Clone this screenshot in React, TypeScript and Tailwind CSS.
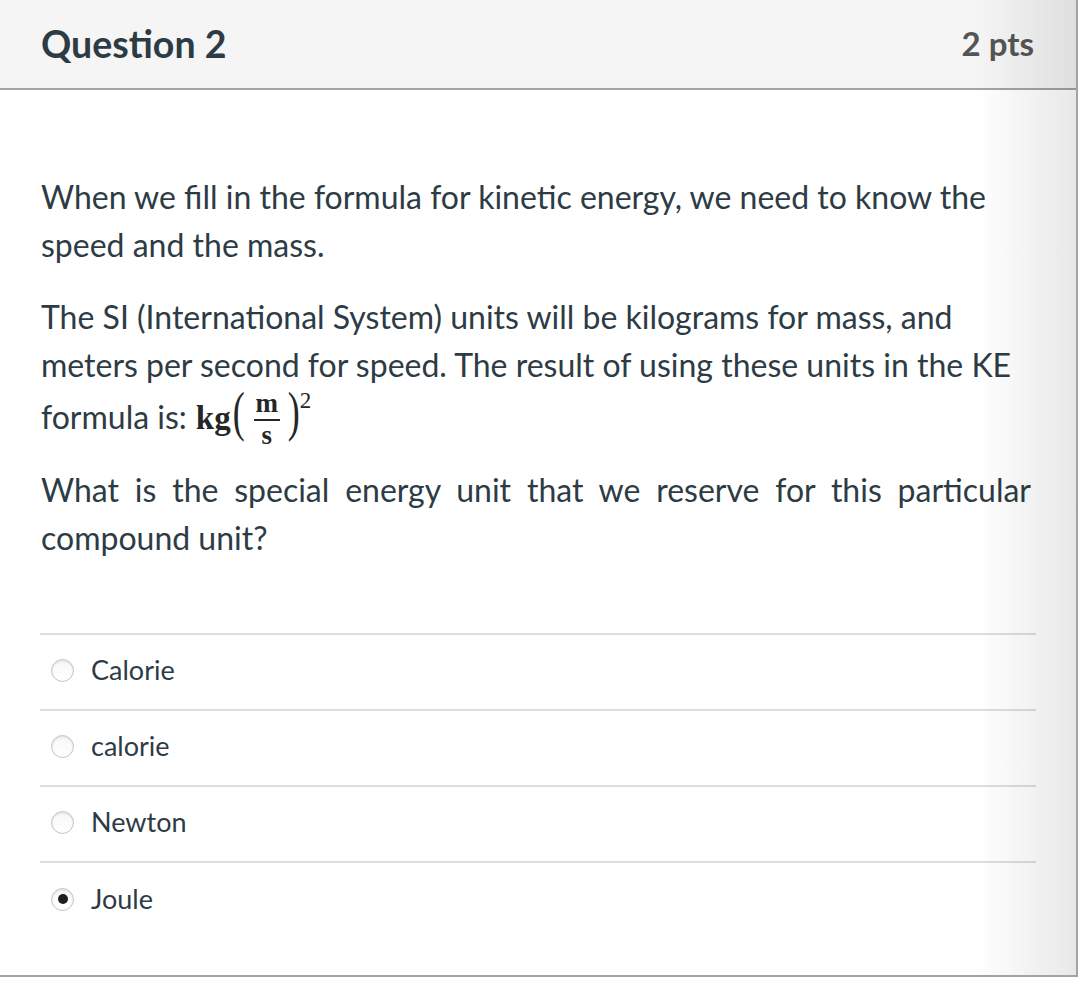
import React from 'react';

const answers = [
  { label: 'Calorie', checked: false },
  { label: 'calorie', checked: false },
  { label: 'Newton', checked: false },
  { label: 'Joule', checked: true },
];

function Radio({ checked }: { checked: boolean }) {
  return (
    <span className="w-[23px] h-[23px] rounded-full border border-[#c4c4c4] bg-gradient-to-b from-[#f7f7f7] to-[#ffffff] shadow-[inset_0_1px_2px_rgba(0,0,0,0.12)] flex items-center justify-center shrink-0">
      {checked && <span className="w-[10px] h-[10px] rounded-full bg-[#1e1e1e]" />}
    </span>
  );
}

// kg(m/s)^2 set like a MathJax formula
function MathUnit() {
  return (
    <span className="font-['Liberation_Serif',serif] text-[#262626] ml-[9px]">
      <span className="text-[33px] font-bold">kg</span>
      <span className="inline-block w-[12px] ml-[2px] text-[36px] leading-none align-[6px] scale-y-[1.55]">(</span>
      <span className="inline-flex flex-col items-center w-[26px] ml-[9px] align-[17px] font-bold text-[27px] leading-[14px]">
        <span>m</span>
        <span className="w-[26px] h-[1.5px] bg-[#262626] mt-[9px]" />
        <span className="mt-[7px]">s</span>
      </span>
      <span className="inline-block w-[11px] ml-[8px] text-[36px] leading-none align-[6px] scale-y-[1.55]">)</span>
      <span className="inline-block ml-[1px] text-[23px] leading-none align-[21px]">2</span>
    </span>
  );
}

export default function App() {
  return (
    <div className="w-[1082px] h-[990px] bg-white font-['Lato',sans-serif] text-[#2d3b45] overflow-hidden">
      <div className="relative w-[1078px] h-[977px] border-r-[2px] border-b-[2px] border-[#a3a3a3] bg-white">
        <div className="flex items-center justify-between h-[90px] bg-[#f5f5f5] border-b-[2px] border-[#a3a3a3] pl-[41px] pr-[42px]">
          <h2 className="text-[37.5px] font-bold">Question 2</h2>
          <span className="text-[33px] font-bold text-[#555555]">2 pts</span>
        </div>
        <div className="pl-[41px] pr-[45px] pt-[83px] text-[32px] leading-[48px]">
          <p>When we fill in the formula for kinetic energy, we need to know the speed and the mass.</p>
          <p className="mt-[24px]">
            The SI (International System) units will be kilograms for mass, and meters per second for speed. The result of using these units in the KE formula is:
            <MathUnit />
          </p>
          <p className="mt-[24px] text-justify">What is the special energy unit that we reserve for this particular compound unit?</p>
        </div>
        <div className="ml-[40px] mr-[40px] mt-[71px] border-t-[2px] border-[#dddddd]">
          {answers.map((a, i) => (
            <div
              key={a.label}
              className={
                'flex items-center gap-[17px] h-[76px] pl-[11px] pb-[4px] text-[27px] ' +
                (i < answers.length - 1 ? 'border-b-[2px] border-[#dddddd]' : '')
              }
            >
              <Radio checked={a.checked} />
              <span>{a.label}</span>
            </div>
          ))}
        </div>
        <div className="absolute top-0 right-0 w-[100px] h-full bg-gradient-to-r from-transparent to-[rgba(0,0,0,0.09)] pointer-events-none" />
      </div>
    </div>
  );
}
